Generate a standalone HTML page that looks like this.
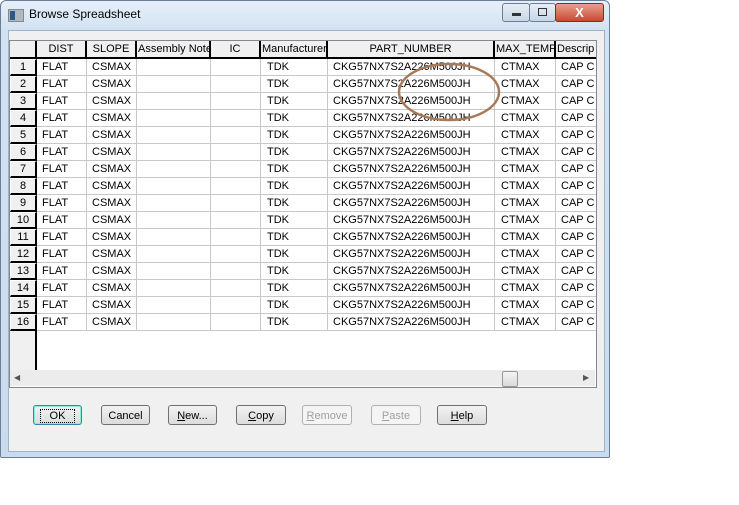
<!DOCTYPE html>
<html><head><style>
body{margin:0;width:739px;height:505px;background:#fff;position:relative;overflow:hidden;font-family:"Liberation Sans",sans-serif;font-size:11px;color:#000}
.frame{position:absolute;left:0;top:0;width:608px;height:456px;border:1px solid #6a7e98;border-radius:6px 6px 2px 2px;background:linear-gradient(180deg,#e6eff9 0,#d2e2f2 30px,#c9dbee 100%)}
.title{position:absolute;left:29px;top:7px;font-size:12px;color:#000}
.icon{position:absolute;left:8px;top:9px;width:14px;height:11px;background:#b0b8c0;border:1px solid #888}
.icon:after{content:"";position:absolute;left:1px;top:1px;width:5px;height:9px;background:#2a5a8a}
.client{position:absolute;left:8px;top:30px;width:595px;height:420px;background:#f0f0f0;border:1px solid #9fb2c8}
.grid{position:absolute;left:9px;top:40px;width:586px;height:346px;background:#fff;border:1px solid #828790;overflow:hidden}
.c{position:absolute;height:16px;line-height:16px;border-right:1px solid #c8c8c8;border-bottom:1px solid #c8c8c8;white-space:nowrap;overflow:hidden;padding-left:5px;box-sizing:border-box}
.h{background:#f0f0f0;border-right:2px solid #000;border-bottom:2px solid #000;text-align:center;padding:0}
.rh{background:#f0f0f0;border-right:2px solid #000;border-bottom:2px solid #000;text-align:center;padding:0;border-left:1px solid #fff;border-top:1px solid #fff}
.btn{position:absolute;top:405px;height:20px;width:49px;border:1px solid #707070;border-radius:3px;background:linear-gradient(#f2f2f2,#dcdcdc);text-align:center;line-height:20px;font-size:11px;box-sizing:border-box}
.dis{color:#a0a0a0;border-color:#adb2b5;background:#f4f4f4}
.cap{position:absolute;top:3px;height:17px;border:1px solid #6d7e94;border-radius:3px;background:linear-gradient(#e8eef6,#c8d6e6)}
</style></head><body>
<div class="frame"></div>
<div class="icon"></div>
<div class="title">Browse Spreadsheet</div>
<div class="cap" style="left:502px;width:26px"><div style="position:absolute;left:9px;top:9px;width:9px;height:3px;background:#333"></div></div>
<div class="cap" style="left:529px;width:25px"><div style="position:absolute;left:8px;top:4px;width:7px;height:6px;border:1px solid #333"></div></div>
<div class="cap" style="left:555px;width:47px;background:linear-gradient(#e8a090,#c74a30);border-color:#7a3020;color:#fff;text-align:center;font-weight:bold;font-size:13px;line-height:17px">X</div>
<div class="client"></div>
<div class="grid" id="g"></div>
<div style="position:absolute;left:10px;top:370px;width:585px;height:16px;background:#ececec"></div>
<div style="position:absolute;left:14px;top:373px;font-size:8px;color:#555">◀</div>
<div style="position:absolute;left:583px;top:373px;font-size:8px;color:#555">▶</div>
<div style="position:absolute;left:502px;top:371px;width:14px;height:14px;border:1px solid #999;border-radius:2px;background:linear-gradient(#f4f4f4,#dadada)"></div>
<div class="btn" style="left:33px;border-color:#3c7fb1;box-shadow:inset 0 0 0 1px #8ed"><span style="outline:1px dotted #000;padding:0 9px">OK</span></div>
<div class="btn" style="left:101px">Cancel</div>
<div class="btn" style="left:168px"><u>N</u>ew...</div>
<div class="btn" style="left:236px;width:50px"><u>C</u>opy</div>
<div class="btn dis" style="left:302px;width:50px"><u>R</u>emove</div>
<div class="btn dis" style="left:371px;width:50px"><u>P</u>aste</div>
<div class="btn" style="left:437px;width:50px"><u>H</u>elp</div>
<svg style="position:absolute;left:0;top:0" width="739" height="505"><ellipse cx="449" cy="92" rx="50" ry="28" fill="none" stroke="#a87a5a" stroke-width="2.5"/></svg>
<script>
var g=document.getElementById('g'),cols=[[0,27],[27,50],[77,50],[127,74],[201,50],[251,67],[318,167],[485,61],[546,44]];
var hd=['','DIST','SLOPE','Assembly Note','IC','Manufacturer','PART_NUMBER','MAX_TEMP','Descrip'];
var v=['FLAT','CSMAX','','','TDK','CKG57NX7S2A226M500JH','CTMAX','CAP C'];
var s='';
for(var i=0;i<9;i++){s+='<div class="c h" style="left:'+cols[i][0]+'px;top:0;width:'+cols[i][1]+'px;height:18px;line-height:17px;'+(i==3||i==5||i==7||i==8?'text-align:left;padding-left:1px;':'')+'">'+hd[i]+'</div>';}
for(var r=0;r<16;r++){var t=18+r*17;
s+='<div class="c rh" style="left:0;top:'+t+'px;width:27px;height:17px;line-height:15px">'+(r+1)+'</div>';
for(var i=1;i<9;i++)s+='<div class="c" style="left:'+cols[i][0]+'px;top:'+t+'px;width:'+cols[i][1]+'px;height:17px;'+(i==5||i==7?'padding-left:6px;':'')+'">'+v[i-1]+'</div>';}
s+='<div style="position:absolute;left:0;top:290px;width:25px;height:40px;background:#f0f0f0;border-right:2px solid #000"></div>';
g.innerHTML=s;
</script>
</body></html>
